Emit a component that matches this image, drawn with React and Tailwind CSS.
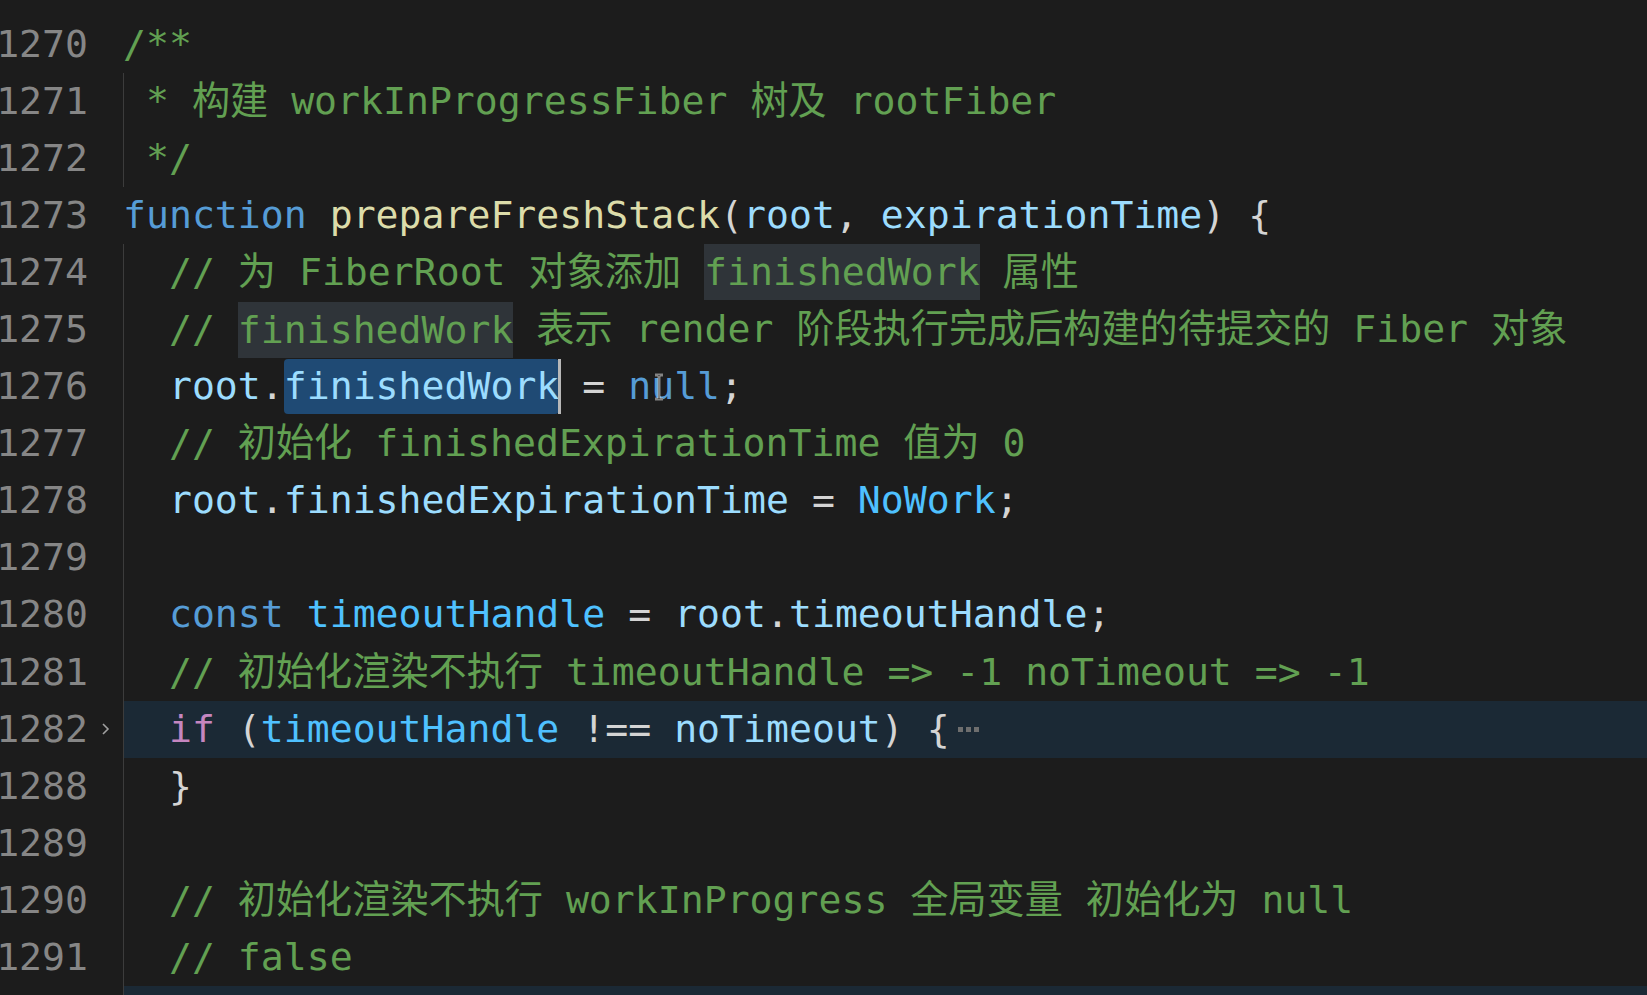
import React from "react";

const C = {
  com: "text-[#62a052]",
  kw: "text-[#569cd6]",
  fn: "text-[#dcdcaa]",
  v: "text-[#9cdcfe]",
  k: "text-[#4fc1ff]",
  p: "text-[#d4d4d4]",
  ctl: "text-[#c586c0]",
};

// each segment: [text, colorClass, extra]
const lines = [
  { n: 1269, segs: [] },
  { n: 1270, segs: [["/**", C.com]] },
  { n: 1271, guide: true, segs: [[" * 构建 workInProgressFiber 树及 rootFiber", C.com]] },
  { n: 1272, guide: true, segs: [[" */", C.com]] },
  {
    n: 1273,
    segs: [
      ["function", C.kw],
      [" ", C.p],
      ["prepareFreshStack", C.fn],
      ["(", C.p],
      ["root", C.v],
      [", ", C.p],
      ["expirationTime", C.v],
      [") {", C.p],
    ],
  },
  {
    n: 1274,
    guide: true,
    segs: [
      ["  // 为 FiberRoot 对象添加 ", C.com],
      ["finishedWork", C.com, "word"],
      [" 属性", C.com],
    ],
  },
  {
    n: 1275,
    guide: true,
    segs: [
      ["  // ", C.com],
      ["finishedWork", C.com, "word"],
      [" 表示 render 阶段执行完成后构建的待提交的 Fiber 对象", C.com],
    ],
  },
  {
    n: 1276,
    guide: true,
    segs: [
      ["  root", C.v],
      [".", C.p],
      ["finishedWork", C.v, "sel"],
      [" = ", C.p],
      ["n", C.kw],
      ["u", C.kw, "mouse"],
      ["ll", C.kw],
      [";", C.p],
    ],
  },
  { n: 1277, guide: true, segs: [["  // 初始化 finishedExpirationTime 值为 0", C.com]] },
  {
    n: 1278,
    guide: true,
    segs: [
      ["  root", C.v],
      [".", C.p],
      ["finishedExpirationTime", C.v],
      [" = ", C.p],
      ["NoWork", C.k],
      [";", C.p],
    ],
  },
  { n: 1279, guide: true, segs: [] },
  {
    n: 1280,
    guide: true,
    segs: [
      ["  const", C.kw],
      [" ", C.p],
      ["timeoutHandle", C.k],
      [" = ", C.p],
      ["root", C.v],
      [".", C.p],
      ["timeoutHandle", C.v],
      [";", C.p],
    ],
  },
  {
    n: 1281,
    guide: true,
    segs: [["  // 初始化渲染不执行 timeoutHandle => -1 noTimeout => -1", C.com]],
  },
  {
    n: 1282,
    guide: true,
    fold: true,
    segs: [
      ["  if", C.ctl],
      [" (", C.p],
      ["timeoutHandle", C.k],
      [" !== ", C.p],
      ["noTimeout", C.v],
      [") {", C.p],
    ],
  },
  { n: 1288, guide: true, segs: [["  }", C.p]] },
  { n: 1289, guide: true, segs: [] },
  {
    n: 1290,
    guide: true,
    segs: [["  // 初始化渲染不执行 workInProgress 全局变量 初始化为 null", C.com]],
  },
  { n: 1291, guide: true, segs: [["  // false", C.com]] },
  { n: 1292, guide: true, band: true, segs: [] },
];

const Seg = ({ s }) => {
  const [text, color, kind] = s;
  if (kind === "word") {
    return (
      <span className={`inline-block bg-[#2f3439] leading-[56px] ${color}`}>{text}</span>
    );
  }
  if (kind === "sel") {
    return (
      <span className={`relative inline-block rounded-[4px] bg-[#1f4a74] leading-[55px] ${color}`}>
        {text}
        <span className="absolute right-[-2px] top-0 h-full w-[3px] bg-[#b8b8b8]" />
      </span>
    );
  }
  if (kind === "mouse") {
    return (
      <span className={`relative ${color}`}>
        {text}
        {/* mouse I-beam over the text */}
        <svg
          className="absolute left-[1px] top-[15px]"
          width="14"
          height="28"
          viewBox="0 0 14 28"
        >
          <path
            d="M3 2h8M7 2v24M3 26h8"
            stroke="#e6e6e6"
            strokeWidth="2.5"
            fill="none"
          />
          <path d="M3 2h8M7 2v24M3 26h8" stroke="#222" strokeWidth="1" fill="none" />
        </svg>
      </span>
    );
  }
  return <span className={color}>{text}</span>;
};

export default function App() {
  return (
    <div className="h-[995px] w-full overflow-hidden bg-[#1c1c1c]">
      <div
        className="ml-[-4px] mt-[-41.6px] text-[38.15px] leading-[57.1px]"
        style={{ fontFamily: "'DejaVu Sans Mono', 'Noto Sans CJK SC', monospace" }}
      >
        {lines.map((l) => (
          <div key={l.n} className="flex h-[57.1px]">
            <div className="w-[92px] shrink-0 text-right text-[#868686]">{l.n}</div>
            <div className="flex w-[35px] shrink-0 items-center justify-center">
              {l.fold && (
                <svg width="12" height="20" viewBox="0 0 12 20">
                  <path d="M3 5l5 5-5 5" stroke="#a0a0a0" strokeWidth="1.6" fill="none" />
                </svg>
              )}
            </div>
            <div
              className={`flex flex-1 items-center whitespace-pre ${
                l.guide ? "shadow-[inset_1px_0_0_#3c3c3c]" : ""
              } ${l.fold || l.band ? "bg-[#1b2935]" : ""}`}
            >
              {l.segs.map((s, i) => (
                <Seg key={i} s={s} />
              ))}
              {l.fold && (
                <span className="ml-[8px] flex gap-[3px]">
                  <span className="h-[5px] w-[5px] bg-[#6e6e6e]" />
                  <span className="h-[5px] w-[5px] bg-[#6e6e6e]" />
                  <span className="h-[5px] w-[5px] bg-[#6e6e6e]" />
                </span>
              )}
            </div>
          </div>
        ))}
      </div>
    </div>
  );
}
